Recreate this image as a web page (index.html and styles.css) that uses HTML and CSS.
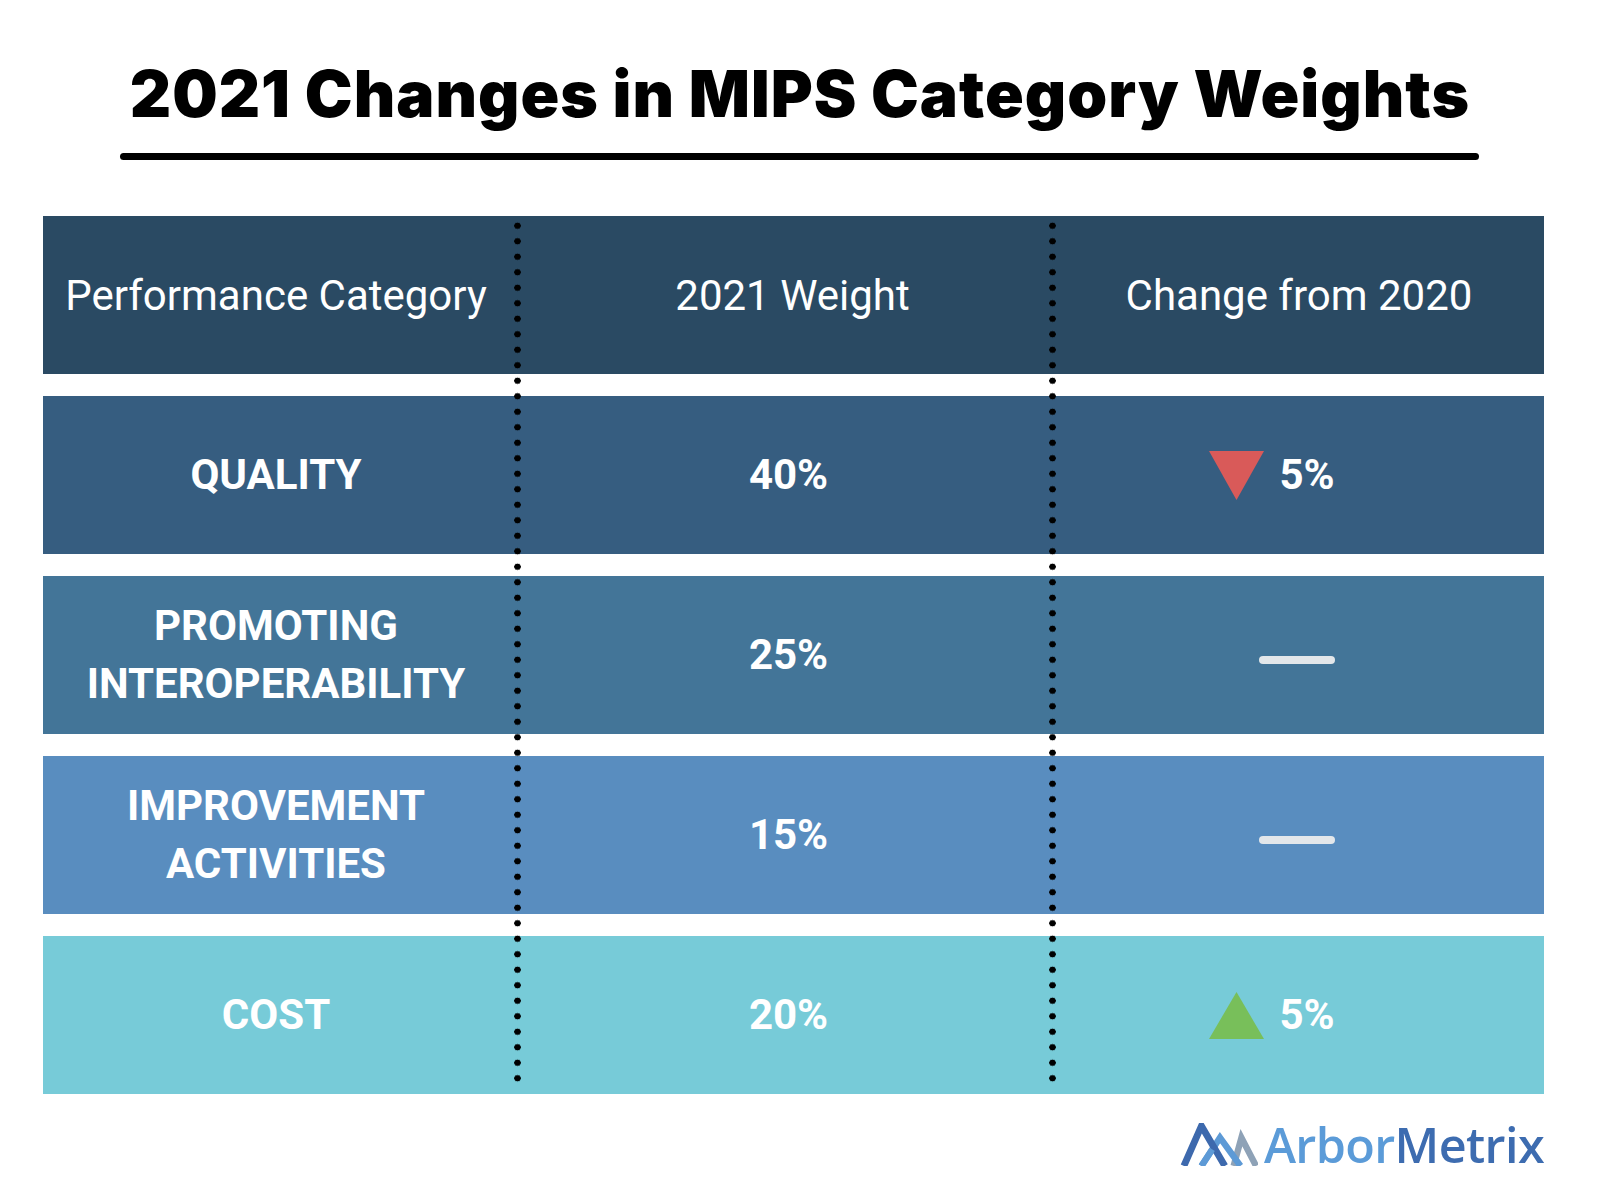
FILE: index.html
```html
<!DOCTYPE html>
<html lang="en">
<head>
<meta charset="utf-8">
<title>2021 Changes in MIPS Category Weights</title>
<link rel="stylesheet" href="styles.css">
</head>
<body>
<div class="page">
  <h1 class="title">2021 Changes in MIPS Category Weights</h1>
  <div class="rule"></div>

  <div class="table">
    <div class="row head">
      <div class="cell c1">Performance Category</div>
      <div class="cell c2">2021 Weight</div>
      <div class="cell c3">Change from 2020</div>
    </div>
    <div class="row r-quality">
      <div class="cell c1 strong">QUALITY</div>
      <div class="cell c2 strong">40%</div>
      <div class="cell c3 strong">
        <div class="change">
          <svg class="tri" viewBox="0 0 55 49" width="55" height="49"><polygon points="0,0 55,0 27.5,49" fill="#d95a59"/></svg>
          <span>5%</span>
        </div>
      </div>
    </div>
    <div class="row r-pi">
      <div class="cell c1 strong two">PROMOTING<br>INTEROPERABILITY</div>
      <div class="cell c2 strong">25%</div>
      <div class="cell c3"><span class="dash"></span></div>
    </div>
    <div class="row r-ia">
      <div class="cell c1 strong two">IMPROVEMENT<br>ACTIVITIES</div>
      <div class="cell c2 strong">15%</div>
      <div class="cell c3"><span class="dash"></span></div>
    </div>
    <div class="row r-cost">
      <div class="cell c1 strong">COST</div>
      <div class="cell c2 strong">20%</div>
      <div class="cell c3 strong">
        <div class="change">
          <svg class="tri" viewBox="0 0 55 47" width="55" height="47"><polygon points="27.5,0 55,47 0,47" fill="#78bf5a"/></svg>
          <span>5%</span>
        </div>
      </div>
    </div>
    <div class="divider d1"></div>
    <div class="divider d2"></div>
  </div>

  <div class="footer">
    <div class="logo">
      <svg class="mark" viewBox="0 0 80 44" width="78" height="43">
        <path d="M55,44 L63,15 L78,44" fill="none" stroke="#8ea2b7" stroke-width="6.5"/>
        <path d="M22,44 L41,15 L62,44" fill="none" stroke="#5d9ad6" stroke-width="6.5"/>
        <path d="M4,44 L22,3 L46,44" fill="none" stroke="#3d69ad" stroke-width="7"/>
        <path d="M22,44 L33,27" fill="none" stroke="#5d9ad6" stroke-width="6.5"/>
      </svg>
      <span class="brand"><span class="arbor">Arbor</span><span class="metrix">Metrix</span></span>
    </div>
  </div>
</div>
</body>
</html>
```

FILE: styles.css
```css
html, body {
  margin: 0;
  padding: 0;
  background: #ffffff;
}

.page {
  width: 1600px;
  height: 1199px;
  position: relative;
  overflow: hidden;
}

.title {
  margin: 54px 0 0 0;
  font-family: Inter, "Liberation Sans", sans-serif;
  font-weight: 900;
  font-size: 64px;
  line-height: 80px;
  text-align: center;
  color: #000;
  letter-spacing: 1px;
}

.rule {
  margin: 19px 0 0 120px;
  width: 1359px;
  height: 7px;
  border-radius: 4px;
  background: #000;
}

.table {
  position: relative;
  margin: 56px 0 0 43px;
  width: 1501px;
  display: grid;
  row-gap: 22px;
}

.row {
  display: grid;
  grid-template-columns: 474px 535px 1fr;
  height: 158px;
  align-items: center;
}

.head { background: #2a4a63; }
.r-quality { background: #365d80; }
.r-pi { background: #437598; }
.r-ia { background: #598dbf; }
.r-cost { background: #77cbd8; }

.cell {
  color: #fff;
  text-align: center;
  font-family: Roboto, "Liberation Sans", sans-serif;
  display: flex;
  justify-content: center;
  align-items: center;
}

.head .cell {
  font-weight: 400;
  font-size: 42px;
}

.c1 { padding-right: 8px; }
.c2 { padding-left: 8px; }
.c3 { padding-left: 2px; }
.head .c2 { padding-left: 16px; }

.strong {
  font-weight: 700;
  font-size: 42px;
  line-height: 58px;
}

.change {
  display: flex;
  align-items: center;
  gap: 15px;
  margin-right: 54px;
}

.tri { display: block; }

.dash {
  display: block;
  width: 76px;
  height: 8px;
  border-radius: 4px;
  background: #e3e7ea;
  margin-top: 10px;
  margin-left: -4px;
}

.divider {
  position: absolute;
  top: 2px;
  width: 7px;
  height: 868px;
  background-image: radial-gradient(circle, #000 3px, rgba(0,0,0,0) 3.5px);
  background-size: 7px 15.5px;
  background-repeat: repeat-y;
}
.d1 { left: 471px; }
.d2 { left: 1006px; }

.footer {
  display: flex;
  justify-content: flex-end;
  width: 1544px;
  margin-top: 25px;
}

.logo {
  display: flex;
  align-items: flex-end;
  gap: 6px;
}

.mark {
  display: block;
  margin-bottom: 3px;
}

.brand {
  font-family: "Open Sans", "Noto Sans", sans-serif;
  font-weight: 600;
  font-size: 48.5px;
  line-height: 50px;
  letter-spacing: -0.6px;
}
.arbor { color: #5b9bd8; }
.metrix { color: #3d6cb0; }
```
